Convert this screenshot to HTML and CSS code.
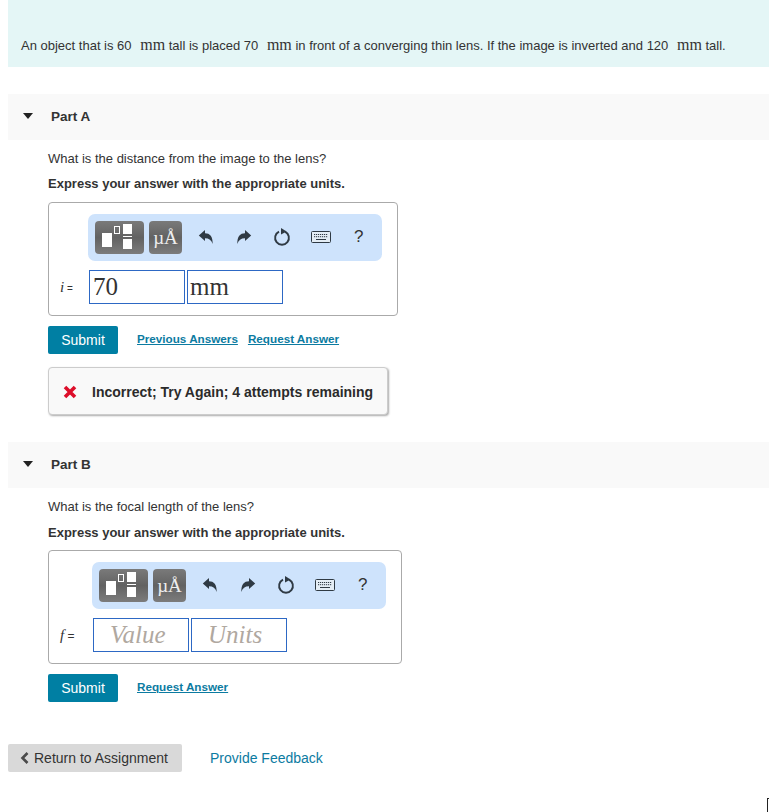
FILE: index.html
```html
<!DOCTYPE html>
<html lang="en">
<head>
<meta charset="utf-8">
<title>Thin lens problem</title>
<link rel="stylesheet" href="styles.css">
</head>
<body>
<div class="intro"><p>An object that is 60 <span class="unit">mm</span> tall is placed 70 <span class="unit">mm</span> in front of a converging thin lens. If the image is inverted and 120 <span class="unit">mm</span> tall.</p></div>

<section class="part part-a">
  <header class="part-head"><span class="caret"></span><h2>Part A</h2></header>
  <div class="part-body">
    <p class="question">What is the distance from the image to the lens?</p>
    <p class="express">Express your answer with the appropriate units.</p>
    <div class="box">
      <div class="toolbar">
        <span class="tool-btn tpl"><svg width="49" height="33" viewBox="0 0 49 33"><rect x="7" y="12" width="10" height="14" fill="#fff"/><rect x="19.5" y="5.5" width="5" height="7" fill="none" stroke="#fff"/><rect x="28" y="3" width="9" height="10" fill="#fff"/><rect x="28" y="15" width="9" height="1" fill="#fff"/><rect x="28" y="18" width="9" height="10" fill="#fff"/></svg></span>
        <span class="tool-btn mu">&micro;&Aring;</span>
        <svg class="ico undo" width="16" height="16" viewBox="0 0 16 16"><path d="M.8 6.5 7 1V4.2C11.8 4.2 15 7.4 14.6 15 13.6 11.2 11 9.2 7 9.2V12Z" fill="#2f3a44"/></svg>
        <svg class="ico redo" width="16" height="16" viewBox="0 0 16 16"><path d="M15.2 6.5 9 1V4.2C4.2 4.2 1 7.4 1.4 15 2.4 11.2 5 9.2 9 9.2V12Z" fill="#2f3a44"/></svg>
        <svg class="ico reset" width="18" height="19" viewBox="0 0 18 19"><path d="M12 4.6A6.9 6.9 0 1 1 6 4.6" fill="none" stroke="#2f3a44" stroke-width="1.9"/><path d="M8 1 13.6 4.6 8 7.6Z" fill="#2f3a44"/></svg>
        <svg class="ico keys" width="20" height="12" viewBox="0 0 20 12"><rect x=".5" y=".5" width="19" height="11" rx="1" fill="#e4edf5" stroke="#2f3a44"/><path d="M3 3.5H17M3 5.7H17" stroke="#2f3a44" stroke-dasharray="1.2 .8"/><path d="M5 8.5H15" stroke="#2f3a44"/></svg>
        <span class="help">?</span>
      </div>
      <div class="answer">
        <span class="label"><i class="var">i</i> =</span>
        <span class="field filled">70</span>
        <span class="field filled unit-field">mm</span>
      </div>
    </div>
    <div class="actions">
      <span class="submit">Submit</span>
      <a class="link" href="#">Previous Answers</a>
      <a class="link" href="#">Request Answer</a>
    </div>
    <div class="feedback">
      <svg width="14" height="14" viewBox="0 0 14 14"><path d="M2 2 12 12M12 2 2 12" stroke="#dd0e2a" stroke-width="3.6"/></svg>
      <span>Incorrect; Try Again; 4 attempts remaining</span>
    </div>
  </div>
</section>

<section class="part part-b">
  <header class="part-head"><span class="caret"></span><h2>Part B</h2></header>
  <div class="part-body">
    <p class="question">What is the focal length of the lens?</p>
    <p class="express">Express your answer with the appropriate units.</p>
    <div class="box">
      <div class="toolbar">
        <span class="tool-btn tpl"><svg width="49" height="33" viewBox="0 0 49 33"><rect x="7" y="12" width="10" height="14" fill="#fff"/><rect x="19.5" y="5.5" width="5" height="7" fill="none" stroke="#fff"/><rect x="28" y="3" width="9" height="10" fill="#fff"/><rect x="28" y="15" width="9" height="1" fill="#fff"/><rect x="28" y="18" width="9" height="10" fill="#fff"/></svg></span>
        <span class="tool-btn mu">&micro;&Aring;</span>
        <svg class="ico undo" width="16" height="16" viewBox="0 0 16 16"><path d="M.8 6.5 7 1V4.2C11.8 4.2 15 7.4 14.6 15 13.6 11.2 11 9.2 7 9.2V12Z" fill="#2f3a44"/></svg>
        <svg class="ico redo" width="16" height="16" viewBox="0 0 16 16"><path d="M15.2 6.5 9 1V4.2C4.2 4.2 1 7.4 1.4 15 2.4 11.2 5 9.2 9 9.2V12Z" fill="#2f3a44"/></svg>
        <svg class="ico reset" width="18" height="19" viewBox="0 0 18 19"><path d="M12 4.6A6.9 6.9 0 1 1 6 4.6" fill="none" stroke="#2f3a44" stroke-width="1.9"/><path d="M8 1 13.6 4.6 8 7.6Z" fill="#2f3a44"/></svg>
        <svg class="ico keys" width="20" height="12" viewBox="0 0 20 12"><rect x=".5" y=".5" width="19" height="11" rx="1" fill="#e4edf5" stroke="#2f3a44"/><path d="M3 3.5H17M3 5.7H17" stroke="#2f3a44" stroke-dasharray="1.2 .8"/><path d="M5 8.5H15" stroke="#2f3a44"/></svg>
        <span class="help">?</span>
      </div>
      <div class="answer">
        <span class="label"><i class="var">f</i> =</span>
        <span class="field placeholder">Value</span>
        <span class="field placeholder">Units</span>
      </div>
    </div>
    <div class="actions">
      <span class="submit">Submit</span>
      <a class="link" href="#">Request Answer</a>
    </div>
  </div>
</section>

<footer class="page-foot">
  <span class="return"><svg width="9" height="12" viewBox="0 0 9 12"><path d="M7.5 1 2.5 6 7.5 11" fill="none" stroke="#4a4a4a" stroke-width="2.6"/></svg>Return to Assignment</span>
  <a class="feedback-link" href="#">Provide Feedback</a>
</footer>
<span class="cursor"></span>
</body>
</html>
```
FILE: styles.css
```css
* { box-sizing: border-box; }
html, body { margin: 0; padding: 0; }
body {
  position: relative;
  width: 769px;
  height: 812px;
  overflow: hidden;
  padding-left: 8px;
  background: #fff;
  color: #333;
  font-family: "Liberation Sans", Arial, sans-serif;
  font-size: 13px;
}
p { margin: 0; }
.intro {
  height: 67px;
  padding: 37px 0 0 13px;
  background: #e4f6f6;
  line-height: 17px;
  font-size: 13px;
  white-space: nowrap;
}
.unit {
  margin-left: 5px;
  font-family: "Liberation Serif", serif;
  font-size: 16px;
  line-height: 1;
}
.part-a { margin-top: 27px; }
.part-b { margin-top: 27px; }
.part-head {
  display: flex;
  align-items: center;
  height: 46px;
  padding-bottom: 2px;
  background: #f9f9f9;
}
.caret {
  width: 0;
  height: 0;
  margin-left: 15px;
  border-left: 5px solid transparent;
  border-right: 5px solid transparent;
  border-top: 6px solid #222;
}
.part-head h2 {
  margin: 0 0 0 18px;
  font-size: 13.5px;
  font-weight: bold;
  color: #333;
}
.part-body { padding: 10px 0 0 40px; }
.question { font-size: 13px; line-height: 17px; }
.express { font-size: 13px; line-height: 17px; margin-top: 9px; font-weight: bold; }
.part-a .express { margin-top: 8px; }
.box {
  display: inline-block;
  margin-top: 9px;
  padding: 11px 15px 11px 10px;
  border: 1px solid #aaa;
  border-radius: 4px;
  vertical-align: top;
}
.part-a .box { width: 350px; margin-top: 10px; }
.part-b .box { width: 354px; }
.toolbar {
  display: flex;
  align-items: center;
  width: 294px;
  height: 47px;
  padding-left: 7px;
  background: #cee3fc;
  border-radius: 7px;
}
.part-a .toolbar { margin-left: 29px; }
.part-b .toolbar { margin-left: 33px; }
.tool-btn {
  display: flex;
  align-items: center;
  justify-content: center;
  height: 33px;
  border-radius: 4px;
  background: linear-gradient(#7a7a7a, #626262 50%, #7c7c7c);
  color: #fff;
}
.tpl { width: 49px; }
.mu {
  width: 33px;
  margin-left: 5px;
  font-family: "Liberation Serif", serif;
  font-size: 19px;
  color: #eee;
}
.ico { flex: none; margin-bottom: 2px; }
.undo { margin-left: 16px; }
.redo { margin-left: 22px; }
.reset { margin-left: 21px; }
.keys { margin-left: 20px; }
.help {
  margin-left: 23px;
  margin-bottom: 2px;
  font-size: 17px;
  color: #333;
}
.answer {
  display: flex;
  align-items: center;
  margin-top: 9px;
}
.label {
  white-space: nowrap;
}
.part-a .label { width: 30px; padding-left: 1px; font-size: 10px; }
.part-b .label { width: 34px; padding-left: 1px; font-size: 12px; }
.var { font-family: "Liberation Serif", serif; font-size: 15px; }
.field {
  display: block;
  width: 96px;
  height: 34px;
  margin-right: 2px;
  border: 1px solid #2d68c4;
  font-family: "Liberation Serif", serif;
  font-size: 25px;
  line-height: 31px;
}
.filled { padding-left: 3px; color: #333; }
.unit-field { padding-left: 2px; line-height: 32px; }
.placeholder {
  padding-left: 16px;
  color: #b0a8a0;
  font-style: italic;
}
.actions {
  display: flex;
  align-items: flex-start;
  margin-top: 10px;
}
.submit {
  display: block;
  width: 70px;
  height: 28px;
  margin-right: 19px;
  border-radius: 2px;
  background: #007fa3;
  color: #fff;
  font-size: 14px;
  line-height: 28px;
  text-align: center;
}
.link {
  margin: 4px 10px 0 0;
  color: #0c7ba1;
  font-size: 11.7px;
  font-weight: bold;
  line-height: 17px;
}
.feedback {
  display: flex;
  align-items: center;
  width: 340px;
  height: 48px;
  margin-top: 13px;
  padding: 2px 0 0 14px;
  background: #f9f9f9;
  border: 1px solid #ccc;
  border-radius: 4px;
  box-shadow: 1px 1px 2px #aaa;
  font-size: 14px;
  font-weight: bold;
  color: #2b2b2b;
}
.feedback span { margin-left: 15px; white-space: nowrap; }
.page-foot {
  display: flex;
  align-items: center;
  margin-top: 42px;
}
.return {
  display: flex;
  align-items: center;
  width: 174px;
  height: 28px;
  padding-left: 12px;
  background: #d9d9d9;
  border-radius: 2px;
  font-size: 14px;
}
.return svg { margin-right: 5px; }
.feedback-link {
  margin-left: 28px;
  color: #0c7ba1;
  font-size: 14px;
  text-decoration: none;
}
.cursor {
  position: absolute;
  left: 767px;
  top: 798px;
  width: 1px;
  height: 14px;
  background: #222;
}
.cursor::before {
  content: "";
  position: absolute;
  left: 0;
  top: 0;
  width: 2px;
  height: 1px;
  background: #222;
}
```
